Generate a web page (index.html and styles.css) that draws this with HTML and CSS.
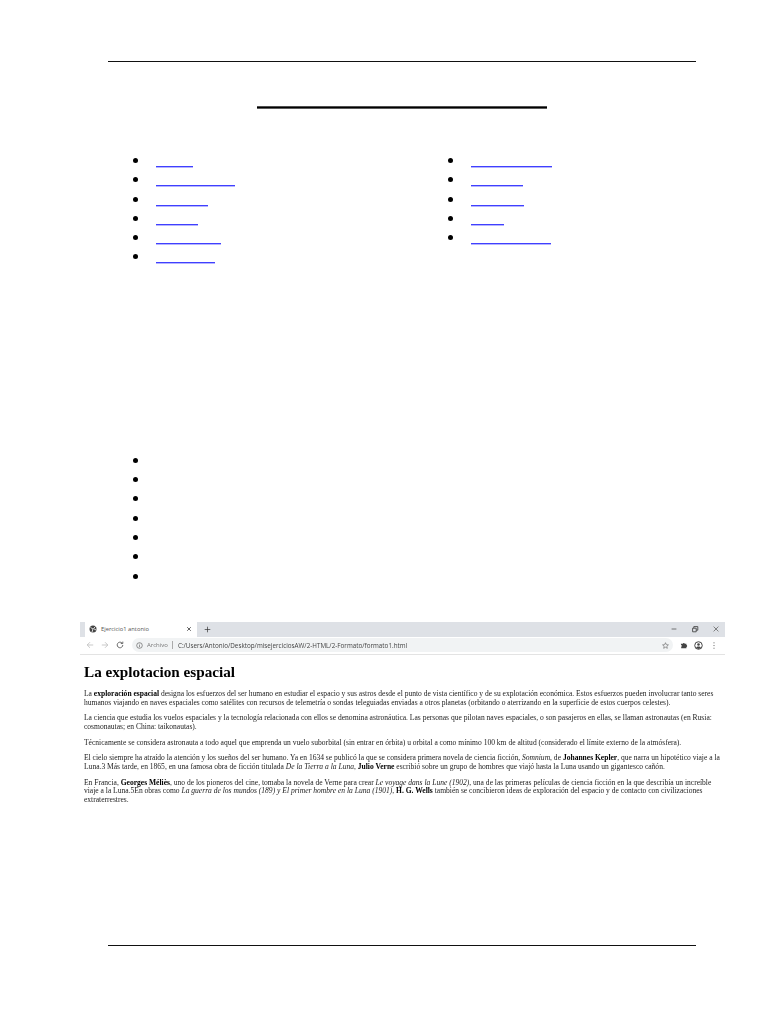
FILE: index.html
```html
<!DOCTYPE html>
<html lang="es">
<head>
<meta charset="UTF-8" />
<meta name="viewport" content="width=device-width, initial-scale=1" />
<title>La explotacion espacial</title>
<link rel="stylesheet" href="styles.css">
</head>
<body>

<div class="page">
  <div class="head-rule"></div>
  <div class="title-rule"></div>

  <div class="link-cols">
    <ul class="bullets">
      <li><a class="blank-link" style="width:37px"></a></li>
      <li><a class="blank-link" style="width:79px"></a></li>
      <li><a class="blank-link" style="width:52px"></a></li>
      <li><a class="blank-link" style="width:42px"></a></li>
      <li><a class="blank-link" style="width:65px"></a></li>
      <li><a class="blank-link" style="width:59px"></a></li>
    </ul>
    <ul class="bullets">
      <li><a class="blank-link" style="width:81px"></a></li>
      <li><a class="blank-link" style="width:52px"></a></li>
      <li><a class="blank-link" style="width:53px"></a></li>
      <li><a class="blank-link" style="width:33px"></a></li>
      <li><a class="blank-link" style="width:80px"></a></li>
    </ul>
  </div>

  <ul class="bullets plain-list">
    <li></li>
    <li></li>
    <li></li>
    <li></li>
    <li></li>
    <li></li>
    <li></li>
  </ul>

  <div class="shot">
    <div class="tabstrip">
      <div class="tab">
        <svg class="favicon" viewBox="0 0 16 16">
          <circle cx="8" cy="8" r="7" fill="#444"/>
          <path d="M3 5 L8 8 L6 14 M13 3 L9 7 L14 10" stroke="#fff" stroke-width="1.6" fill="none"/>
        </svg>
        <span class="tab-title">Ejercicio1 antonio</span>
        <svg class="tab-close" viewBox="0 0 10 10">
          <path d="M2 2 L8 8 M8 2 L2 8" stroke="#444" stroke-width="1.4"/>
        </svg>
      </div>
      <svg class="new-tab" viewBox="0 0 10 10">
        <path d="M5 1 V9 M1 5 H9" stroke="#333" stroke-width="1"/>
      </svg>
      <div class="win-btns">
        <svg viewBox="0 0 10 10"><path d="M2 5 H8" stroke="#555" stroke-width="1"/></svg>
        <svg viewBox="0 0 10 10"><path d="M2 4 H6.5 V8.5 H2 Z M3.5 4 V2 H8.5 V6.5 H6.5" stroke="#444" stroke-width="1.1" fill="none"/></svg>
        <svg viewBox="0 0 10 10"><path d="M2 2 L8 8 M8 2 L2 8" stroke="#666" stroke-width="1"/></svg>
      </div>
    </div>

    <div class="toolbar">
      <svg class="tool-icon" viewBox="0 0 10 10"><path d="M9 5 H1.5 M5 1.5 L1.5 5 L5 8.5" stroke="#bbb" stroke-width="1" fill="none"/></svg>
      <svg class="tool-icon" viewBox="0 0 10 10"><path d="M1 5 H8.5 M5 1.5 L8.5 5 L5 8.5" stroke="#bbb" stroke-width="1" fill="none"/></svg>
      <svg class="tool-icon" viewBox="0 0 10 10"><path d="M8.5 5 A3.5 3.5 0 1 1 7.4 2.4 M8.5 0.8 V3.2 H6" stroke="#555" stroke-width="1.1" fill="none"/></svg>
      <div class="omnibox">
        <svg class="info-icon" viewBox="0 0 10 10">
          <circle cx="5" cy="5" r="4" stroke="#666" stroke-width="1" fill="none"/>
          <path d="M5 4.4 V7.4 M5 2.6 V3.5" stroke="#666" stroke-width="1"/>
        </svg>
        <span class="omni-scheme">Archivo</span>
        <span class="omni-sep"></span>
        <span class="omni-url">C:/Users/Antonio/Desktop/misejerciciosAW/2-HTML/2-Formato/formato1.html</span>
        <svg class="star-icon" viewBox="0 0 10 10">
          <path d="M5 1 L6.2 3.8 L9.2 4.1 L6.9 6.1 L7.6 9 L5 7.5 L2.4 9 L3.1 6.1 L.8 4.1 L3.8 3.8 Z" stroke="#666" stroke-width=".9" fill="none"/>
        </svg>
      </div>
      <svg class="ext-icon" viewBox="0 0 10 10">
        <path d="M1 3.5 H3.5 A1.3 1.3 0 0 1 6 3.5 H8 V5 A1.3 1.3 0 0 1 8 7.5 V9 H1.5 V7.3 A1.3 1.3 0 0 0 1.5 5 Z" fill="#444"/>
      </svg>
      <svg class="avatar-icon" viewBox="0 0 10 10">
        <circle cx="5" cy="5" r="4.2" fill="none" stroke="#444" stroke-width="1.1"/>
        <circle cx="5" cy="3.8" r="1.4" fill="#444"/>
        <path d="M2.2 7.4 C3.4 5.7 6.6 5.7 7.8 7.4 L5 9 Z" fill="#444"/>
      </svg>
      <svg class="dots-icon" viewBox="0 0 4 10">
        <path d="M2 1.5 V2.6 M2 4.5 V5.6 M2 7.5 V8.6" stroke="#555" stroke-width="1"/>
      </svg>
    </div>

    <div class="doc">
      <h1>La explotacion espacial</h1>
      <p>La <b>exploración espacial</b> designa los esfuerzos del ser humano en estudiar el espacio y sus astros desde el punto de vista científico y de su explotación económica. Estos esfuerzos pueden involucrar tanto seres humanos viajando en naves espaciales como satélites con recursos de telemetría o sondas teleguiadas enviadas a otros planetas (orbitando o aterrizando en la superficie de estos cuerpos celestes).</p>
      <p>La ciencia que estudia los vuelos espaciales y la tecnología relacionada con ellos se denomina astronáutica. Las personas que pilotan naves espaciales, o son pasajeros en ellas, se llaman astronautas (en Rusia: cosmonautas; en China: taikonautas).</p>
      <p>Técnicamente se considera astronauta a todo aquel que emprenda un vuelo suborbital (sin entrar en órbita) u orbital a como mínimo 100 km de altitud (considerado el límite externo de la atmósfera).</p>
      <p>El cielo siempre ha atraído la atención y los sueños del ser humano. Ya en 1634 se publicó la que se considera primera novela de ciencia ficción, <i>Somnium</i>, de <b>Johannes Kepler</b>, que narra un hipotético viaje a la Luna.3 Más tarde, en 1865, en una famosa obra de ficción titulada <i>De la Tierra a la Luna</i>, <b>Julio Verne</b> escribió sobre un grupo de hombres que viajó hasta la Luna usando un gigantesco cañón.</p>
      <p>En Francia, <b>Georges Méliès</b>, uno de los pioneros del cine, tomaba la novela de Verne para crear <i>Le voyage dans la Lune (1902)</i>, una de las primeras películas de ciencia ficción en la que describía un increíble viaje a la Luna.5En obras como <i>La guerra de los mundos (189) y El primer hombre en la Luna (1901)</i>, <b>H. G. Wells</b> también se concibieron ideas de exploración del espacio y de contacto con civilizaciones extraterrestres.</p>
    </div>
  </div>

  <div class="foot-rule"></div>
</div>

</body>
</html>
```

FILE: styles.css
```css
body {
  margin: 0;
  background: #fff;
  font-family: "Liberation Serif", serif;
  color: #000;
}
.page {
  width: 768px;
  height: 1024px;
  box-sizing: border-box;
  display: flex;
  flex-direction: column;
  padding-top: 61px;
  padding-bottom: 78px;
  overflow: hidden;
}
.head-rule,
.foot-rule {
  height: 1px;
  background: #111;
  margin-left: 108px;
  width: 588px;
  flex: none;
}
.foot-rule {
  margin-top: auto;
}
.title-rule {
  height: 3px;
  width: 290px;
  margin: 44px 0 0 257px;
  background: linear-gradient(#777, #000 50%, #888);
  flex: none;
}

/* bullet lists, the link text is blank in the source so only the underline shows */
.link-cols {
  display: grid;
  grid-template-columns: 315px 315px;
  margin: 42px 0 0 133px;
  flex: none;
}
.bullets {
  list-style: none;
  margin: 0;
  padding: 0;
}
.bullets li {
  position: relative;
  height: 19.3px;
  box-sizing: border-box;
  padding: 15px 0 0 23px;
}
.bullets li::before {
  content: "";
  position: absolute;
  left: 0;
  top: 7px;
  width: 5px;
  height: 5px;
  border-radius: 50%;
  background: #000;
}
.blank-link {
  display: block;
  height: 1px;
  background: #4040ff;
  box-shadow: 0 1px 0 #b4b4ff;
}
.plain-list {
  margin: 184px 0 0 133px;
  flex: none;
}

/* screenshot of the browser window */
.shot {
  width: 645px;
  margin: 36px 0 0 80px;
  height: 182px;
  overflow: hidden;
  flex: none;
  filter: blur(0.4px);
  font-family: "Open Sans", "Liberation Sans", sans-serif;
}
.tabstrip {
  height: 15px;
  background: #dee1e6;
  display: flex;
  align-items: center;
  padding-left: 5px;
}
.tab {
  width: 112px;
  height: 15px;
  background: #fff;
  display: flex;
  align-items: center;
  box-sizing: border-box;
  padding-left: 4px;
}
.favicon {
  width: 8px;
  height: 8px;
  flex: none;
}
.tab-title {
  font-size: 5.8px;
  color: #555;
  margin-left: 4px;
  flex: 1;
}
.tab-close {
  width: 6px;
  height: 6px;
  margin-right: 5px;
  flex: none;
}
.new-tab {
  width: 7px;
  height: 7px;
  margin-left: 7px;
  flex: none;
}
.win-btns {
  margin-left: auto;
  display: flex;
  align-items: center;
  gap: 13px;
  padding-right: 5px;
}
.win-btns svg {
  width: 8px;
  height: 8px;
}
.toolbar {
  height: 17px;
  border-bottom: 1px solid #e3e3e3;
  display: flex;
  align-items: center;
  padding-left: 6px;
}
.tool-icon {
  width: 8px;
  height: 8px;
  margin-right: 7px;
  flex: none;
}
.omnibox {
  width: 541px;
  height: 14px;
  margin-left: 1px;
  border-radius: 7px;
  background: #f1f3f4;
  display: flex;
  align-items: center;
  padding: 0 4px;
  box-sizing: border-box;
  flex: none;
}
.info-icon {
  width: 7px;
  height: 7px;
  flex: none;
}
.omni-scheme {
  font-size: 6px;
  color: #777;
  margin-left: 4px;
}
.omni-sep {
  width: 1px;
  height: 8px;
  background: #aaa;
  margin: 0 4.5px;
}
.omni-url {
  font-size: 6.3px;
  color: #444;
}
.star-icon {
  width: 7px;
  height: 7px;
  margin-left: auto;
  flex: none;
}
.ext-icon {
  width: 8px;
  height: 8px;
  margin-left: 7px;
  flex: none;
}
.avatar-icon {
  width: 9px;
  height: 9px;
  margin-left: 6px;
  flex: none;
}
.dots-icon {
  width: 4px;
  height: 9px;
  margin-left: 9px;
  flex: none;
}
.doc {
  padding: 8px 0 0 4px;
  width: 644px;
  box-sizing: border-box;
  font-family: "Liberation Serif", serif;
  font-size: 7.55px;
  line-height: 8.9px;
  color: #222;
}
.doc h1 {
  font-size: 15.2px;
  line-height: 18px;
  margin: 0 0 9px;
  color: #000;
}
.doc p {
  margin: 0 0 6.6px;
}
.doc b {
  color: #000;
}
```
